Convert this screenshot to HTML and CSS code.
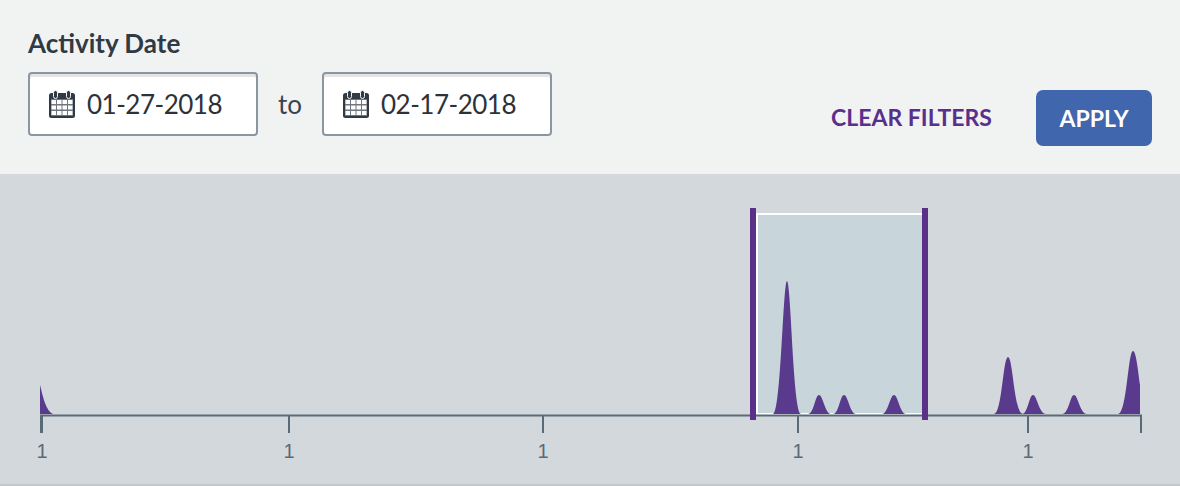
FILE: index.html
```html
<!DOCTYPE html>
<html lang="en">
<head>
<meta charset="utf-8">
<title>Activity Date</title>
<link rel="stylesheet" href="styles.css">
</head>
<body>
<svg class="defs" width="0" height="0" aria-hidden="true">
  <symbol id="cal" viewBox="0 0 26 28">
    <rect x="0" y="3" width="26" height="25" rx="2.500" fill="#2f3a44"/>
    <rect x="4.500" y="0.500" width="4" height="8" rx="2" fill="#2f3a44" stroke="#f4f5f5" stroke-width="1"/>
    <rect x="17.500" y="0.500" width="4" height="8" rx="2" fill="#2f3a44" stroke="#f4f5f5" stroke-width="1"/>
    <rect x="2" y="9" width="22" height="17" fill="#6f767d"/>
    <g fill="#fff">
      <rect x="2.500" y="10" width="4.500" height="4"/><rect x="8" y="10" width="4.500" height="4"/><rect x="13.500" y="10" width="4.500" height="4"/><rect x="19" y="10" width="4.500" height="4"/>
      <rect x="2.500" y="15.500" width="4.500" height="4"/><rect x="8" y="15.500" width="4.500" height="4"/><rect x="13.500" y="15.500" width="4.500" height="4"/><rect x="19" y="15.500" width="4.500" height="4"/>
      <rect x="2.500" y="21" width="4.500" height="4"/><rect x="8" y="21" width="4.500" height="4"/><rect x="13.500" y="21" width="4.500" height="4"/><rect x="19" y="21" width="4.500" height="4"/>
    </g>
  </symbol>
</svg>
<main class="panel">
  <section class="filters">
    <div class="dates">
      <div class="label">Activity Date</div>
      <div class="range">
        <div class="date"><svg class="icon"><use href="#cal"/></svg><span>01-27-2018</span></div>
        <span class="to">to</span>
        <div class="date"><svg class="icon"><use href="#cal"/></svg><span>02-17-2018</span></div>
      </div>
    </div>
    <div class="actions">
      <a class="clear">CLEAR FILTERS</a>
      <button class="apply">APPLY</button>
    </div>
  </section>
  <section class="chart">
    <svg class="plot" width="1180" height="310" viewBox="0 174 1180 310">
      <path class="sel" d="M756 214H922V414H756Z"/>
      <path class="edge" d="M757 214V414M756 214H928M756 414H928"/>
      <g class="area">
        <path d="M40 385C43 397 46 411 53 414L40 414Z"/>
        <path d="M773 414C781 414 783 281 787 281C791 281 793 414 801 414Z"/>
        <path d="M808 414C814 414 815 395 819 395C823 395 825 414 831 414Z"/>
        <path d="M833 414C839 414 840 395 844 395C848 395 850 414 856 414Z"/>
        <path d="M882 414C888 414 890 395 894 395C898 395 900 414 906 414Z"/>
        <path d="M994 414C1002 414 1003 357 1008 357C1013 357 1014 414 1023 414Z"/>
        <path d="M1022 414C1028 414 1029 395 1033 395C1037 395 1039 414 1046 414Z"/>
        <path d="M1062 414C1069 414 1070 395 1074 395C1078 395 1080 414 1087 414Z"/>
        <path d="M1118 414C1127 414 1128 351 1133 351C1136 351 1138 370 1140 385L1140 414Z"/>
      </g>
      <g class="axis">
        <path d="M40 415.500H1142"/>
        <path d="M289 415V433M543 415V433M798 415V433M1028 415V433M1141 415V433"/>
        <path class="first" d="M41.500 415V433"/>
      </g>
      <g class="ticks">
        <text x="42" y="458">1</text>
        <text x="289" y="458">1</text>
        <text x="543" y="458">1</text>
        <text x="798" y="458">1</text>
        <text x="1028" y="458">1</text>
      </g>
      <rect class="handle" x="750" y="208" width="6" height="212"/>
      <rect class="handle" x="922" y="208" width="6" height="212"/>
    </svg>
  </section>
</main>
</body>
</html>
```

FILE: styles.css
```css
html, body {
  margin: 0;
  padding: 0;
  height: 100%;
  overflow: hidden;
}

body {
  font-family: Lato, "Open Sans", sans-serif;
  background: #d3d8dc;
}

.defs {
  display: block;
  height: 0;
}

.panel {
  display: flex;
  flex-direction: column;
  height: 486px;
}

.filters {
  box-sizing: border-box;
  height: 174px;
  padding: 28px 28px 0;
  display: flex;
  justify-content: space-between;
  background: #f1f3f3;
}

.label {
  font-size: 26px;
  line-height: 30px;
  font-weight: 700;
  color: #2f3a44;
  margin-bottom: 14px;
}

.range {
  display: flex;
  align-items: center;
}

.date {
  box-sizing: border-box;
  width: 230px;
  height: 64px;
  padding-left: 19px;
  display: flex;
  align-items: center;
  gap: 12px;
  background: #fff;
  border: 2px solid #8a96a1;
  border-radius: 4px;
  box-shadow: inset 0 3px 0 #e3e5e5;
  font-size: 26px;
  letter-spacing: -0.5px;
  color: #2a333b;
}

.icon {
  width: 26px;
  height: 28px;
  flex: none;
}

.to {
  width: 64px;
  text-align: center;
  font-size: 26px;
  color: #3a444e;
}

.actions {
  display: flex;
  align-items: center;
  gap: 44px;
  height: 56px;
  margin-top: 62px;
}

.clear {
  font-size: 23px;
  font-weight: 700;
  color: #5a2f8c;
  position: relative;
  top: -1px;
}

.apply {
  width: 116px;
  height: 56px;
  padding: 0;
  border: 0;
  border-radius: 7px;
  background: #4066ad;
  color: #fff;
  font: 700 23px Lato, sans-serif;
}

.chart {
  flex: 1;
  background: #d3d8dc;
  border-bottom: 2px solid #c3c8cc;
}

.plot {
  display: block;
}

.sel {
  fill: #c8d6dc;
}

.edge {
  fill: none;
  stroke: #fff;
  stroke-width: 2;
}

.area path {
  fill: #5a3a8c;
}

.axis path {
  fill: none;
  stroke: #5a6b78;
  stroke-width: 2;
}

.axis .first {
  stroke-width: 3;
}

.ticks text {
  font: 20px "Liberation Sans", sans-serif;
  fill: #5a6b78;
  text-anchor: middle;
}

.handle {
  fill: #5a3088;
}
```
